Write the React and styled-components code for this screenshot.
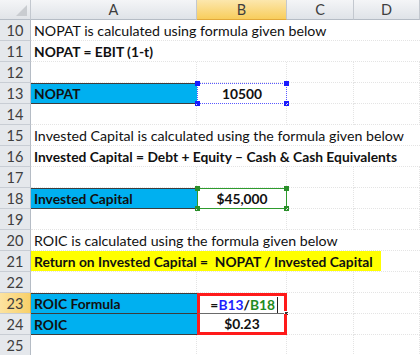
import React from "react";
import styled, { createGlobalStyle, css } from "styled-components";

const GlobalStyle = createGlobalStyle`
  html, body { margin: 0; padding: 0; background: #fff; }
  body { font-family: "Lato", "Liberation Sans", sans-serif; overflow: hidden; }
  * { box-sizing: border-box; }
`;

const COLS = "31px 166px 90px 67px 1fr";

const Sheet = styled.div`
  width: 420px;
  height: 355px;
  overflow: hidden;
  display: flex;
  flex-direction: column;
`;

const HeaderRow = styled.div`
  display: grid;
  grid-template-columns: ${COLS};
  height: 20px;
  flex: none;
`;

const Corner = styled.div`
  position: relative;
  background: linear-gradient(#f4f5f7, #e1e4e8);
  border-right: 1px solid #c3c8cf;
  border-bottom: 1px solid #b5bcc5;

  &:after {
    content: "";
    position: absolute;
    right: 3px;
    bottom: 3px;
    border-style: solid;
    border-width: 0 0 11px 11px;
    border-color: transparent transparent #c9ccd0 transparent;
  }
`;

const ColHead = styled.div`
  display: flex;
  align-items: center;
  justify-content: center;
  font-size: 14.5px;
  color: #3e3e3e;
  background: ${(p) =>
    p.$active
      ? "linear-gradient(#fce7ad, #f8cd5c)"
      : "linear-gradient(#f4f5f7, #dfe3e8)"};
  border-right: 1px solid #c3c8cf;
  border-bottom: 1px solid ${(p) => (p.$active ? "#e2a93a" : "#b5bcc5")};
`;

const Row = styled.div`
  display: grid;
  grid-template-columns: ${COLS};
  height: 21px;
  flex: none;
`;

const RowHead = styled.div`
  display: flex;
  align-items: center;
  justify-content: center;
  font-size: 14.5px;
  color: #3e3e3e;
  background: ${(p) =>
    p.$active ? "linear-gradient(90deg, #fce3a0, #f8d06a)" : "#e5e8ec"};
  border-right: 1px solid ${(p) => (p.$active ? "#e2a93a" : "#b5bcc5")};
  border-bottom: 1px solid #c8cdd4;
`;

const Cell = styled.div`
  position: relative;
  display: flex;
  align-items: center;
  padding: 0 3px;
  white-space: nowrap;
  font-size: ${(p) => (p.$bold ? "13.8px" : "14.2px")};
  color: #111;
  font-weight: ${(p) => (p.$bold ? 700 : 400)};
  border-right: 1px dotted #e4e4e4;
  border-bottom: 1px dotted #e4e4e4;
  ${(p) =>
    p.$span &&
    css`
      grid-column: 2 / -1;
      border-right: none;
    `}
`;

const Highlight = styled.span`
  background: #ffff00;
  align-self: stretch;
  display: flex;
  align-items: center;
  margin-left: -3px;
  padding: 0 8px 0 3px;
`;

const LabelCell = styled(Cell)`
  font-weight: 700;
  font-size: 13.8px;
  background: #00b0f0;
  border-right: none;
  border-bottom: 1px solid #3c3c3c;
  ${(p) =>
    p.$top &&
    css`
      border-top: 1px solid #3c3c3c;
    `}
`;

const tones = {
  blue: css`
    border: 1px dotted #5a5aff;
  `,
  green: css`
    border: 1px solid #2e9b2e;
  `,
  redTop: css`
    border: 3px solid #ff1a1a;
    border-bottom: 1px solid #6a6a6a;
  `,
  redBottom: css`
    border: 3px solid #ff1a1a;
    border-top: none;
  `,
};

const ValueCell = styled(Cell)`
  font-weight: 700;
  font-size: 13.8px;
  justify-content: ${(p) => (p.$right ? "flex-end" : "center")};
  padding-right: ${(p) => (p.$right ? "6px" : "3px")};
  ${(p) => tones[p.$tone]}
`;

const Handle = styled.span`
  position: absolute;
  width: 5px;
  height: 5px;
  background: ${(p) => p.$color};
  ${(p) => (p.$pos.includes("t") ? "top: -3px;" : "bottom: -3px;")}
  ${(p) => (p.$pos.includes("l") ? "left: -3px;" : "right: -3px;")}
`;

const FillHandle = styled.span`
  position: absolute;
  right: -5px;
  bottom: -3px;
  width: 5px;
  height: 5px;
  background: #333;
  border: 1px solid #fff;
`;

const Ref = styled.span`
  color: ${(p) => p.$color};
`;

const Caret = styled.span`
  width: 1px;
  height: 16px;
  background: #222;
  margin-left: 2px;
`;

const Empty = () => (
  <>
    <Cell />
    <Cell />
    <Cell />
    <Cell />
  </>
);

const handles = (color) =>
  ["tl", "tr", "bl", "br"].map((p) => <Handle key={p} $pos={p} $color={color} />);

export default function App() {
  return (
    <>
      <GlobalStyle />
      <Sheet>
        <HeaderRow>
          <Corner />
          <ColHead>A</ColHead>
          <ColHead $active>B</ColHead>
          <ColHead>C</ColHead>
          <ColHead>D</ColHead>
        </HeaderRow>

        <Row>
          <RowHead>10</RowHead>
          <Cell $span>NOPAT is calculated using formula given below</Cell>
        </Row>
        <Row>
          <RowHead>11</RowHead>
          <Cell $span $bold>NOPAT = EBIT (1-t)</Cell>
        </Row>
        <Row>
          <RowHead>12</RowHead>
          <Empty />
        </Row>
        <Row>
          <RowHead>13</RowHead>
          <LabelCell $top>NOPAT</LabelCell>
          <ValueCell $tone="blue">
            10500
            {handles("#1a1aff")}
          </ValueCell>
          <Cell />
          <Cell />
        </Row>
        <Row>
          <RowHead>14</RowHead>
          <Empty />
        </Row>
        <Row>
          <RowHead>15</RowHead>
          <Cell $span>Invested Capital is calculated using the formula given below</Cell>
        </Row>
        <Row>
          <RowHead>16</RowHead>
          <Cell $span $bold>
            Invested Capital = Debt + Equity – Cash &amp; Cash Equivalents
          </Cell>
        </Row>
        <Row>
          <RowHead>17</RowHead>
          <Empty />
        </Row>
        <Row>
          <RowHead>18</RowHead>
          <LabelCell $top>Invested Capital</LabelCell>
          <ValueCell $tone="green">
            $45,000
            {handles("#2a8f2a")}
          </ValueCell>
          <Cell />
          <Cell />
        </Row>
        <Row>
          <RowHead>19</RowHead>
          <Empty />
        </Row>
        <Row>
          <RowHead>20</RowHead>
          <Cell $span>ROIC is calculated using the formula given below</Cell>
        </Row>
        <Row>
          <RowHead>21</RowHead>
          <Cell $span $bold>
            <Highlight>Return on Invested Capital =&nbsp; NOPAT / Invested Capital</Highlight>
          </Cell>
        </Row>
        <Row>
          <RowHead>22</RowHead>
          <Empty />
        </Row>
        <Row>
          <RowHead $active>23</RowHead>
          <LabelCell $top>ROIC Formula</LabelCell>
          <ValueCell $tone="redTop" $right>
            =<Ref $color="#1f1fff">B13</Ref>/<Ref $color="#228b22">B18</Ref>
            <Caret />
            <FillHandle />
          </ValueCell>
          <Cell />
          <Cell />
        </Row>
        <Row>
          <RowHead>24</RowHead>
          <LabelCell>ROIC</LabelCell>
          <ValueCell $tone="redBottom">$0.23</ValueCell>
          <Cell />
          <Cell />
        </Row>
        <Row>
          <RowHead>25</RowHead>
          <Empty />
        </Row>
      </Sheet>
    </>
  );
}
